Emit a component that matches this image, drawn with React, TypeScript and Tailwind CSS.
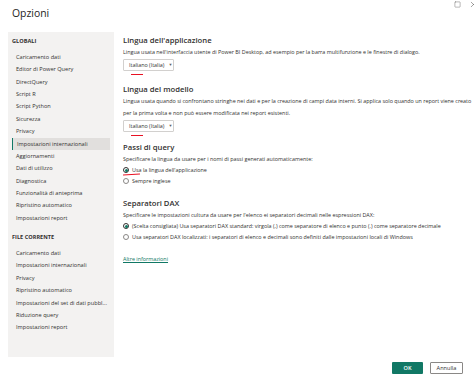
import { Square, X } from 'lucide-react';

const GLOBALI = [
  'Caricamento dati',
  'Editor di Power Query',
  'DirectQuery',
  'Script R',
  'Script Python',
  'Sicurezza',
  'Privacy',
  'Impostazioni internazionali',
  'Aggiornamenti',
  'Dati di utilizzo',
  'Diagnostica',
  'Funzionalità di anteprima',
  'Ripristino automatico',
  'Impostazioni report',
];

const FILE_CORRENTE = [
  'Caricamento dati',
  'Impostazioni internazionali',
  'Privacy',
  'Ripristino automatico',
  'Impostazioni del set di dati pubbl...',
  'Riduzione query',
  'Impostazioni report',
];

function NavItem({ label, active }: { label: string; active?: boolean }) {
  return (
    <div
      className={
        'h-[12.4px] mx-[4px] pl-[4px] flex items-center text-[5.6px] text-[#323130] whitespace-nowrap ' +
        (active ? 'bg-[#e1dfdd] border-l-[1.5px] border-[#117865] pl-[2.5px]' : '')
      }
    >
      {label}
    </div>
  );
}

function Dropdown() {
  return (
    <div className="w-[51px] h-[12px] border border-[#d2d0ce] rounded-[1px] flex items-center pl-[5px] gap-[4px] text-[5.4px] text-[#323130] bg-white">
      Italiano (Italia)
      <span className="text-[4px] text-[#605e5c]">▼</span>
    </div>
  );
}

function Radio({ checked, label }: { checked?: boolean; label: string }) {
  return (
    <div className="flex items-center gap-[3px] h-[10.5px] text-[5.4px] text-[#323130] whitespace-nowrap">
      <span
        className={
          'w-[6px] h-[6px] rounded-full border flex items-center justify-center shrink-0 ' +
          (checked ? 'border-[#323130]' : 'border-[#8a8886]')
        }
      >
        {checked && <span className="w-[3px] h-[3px] rounded-full bg-[#117865]" />}
      </span>
      {label}
    </div>
  );
}

function Heading({ children }: { children: string }) {
  return <h2 className="text-[7.7px] font-semibold text-[#323130] leading-[12px]">{children}</h2>;
}

function Desc({ children }: { children: string }) {
  return <p className="text-[5.4px] text-[#323130] leading-[12px]">{children}</p>;
}

export default function App() {
  return (
    <div
      className="w-[474px] h-[378px] bg-white relative overflow-hidden flex flex-col"
      style={{ fontFamily: '"Open Sans", "Noto Sans", sans-serif' }}
    >
      <div className="absolute right-[-4px] top-[0px] flex items-center gap-[8px] text-[#605e5c]">
        <Square className="w-[7px] h-[7px]" strokeWidth={1.5} />
        <X className="w-[9px] h-[9px]" strokeWidth={1.5} />
      </div>

      <div className="h-[32px] pl-[12px] pt-[6px] text-[10.4px] text-[#252423] leading-[14px]">Opzioni</div>

      <div className="flex h-[325px]">
        <nav className="ml-[8px] w-[106px] bg-[#f3f2f1] pt-[3px]">
          <div className="h-[12px] pl-[4px] flex items-center text-[5.6px] font-bold text-[#323130]">GLOBALI</div>
          <div className="mt-[3.8px]">
            {GLOBALI.map((l) => (
              <NavItem key={l} label={l} active={l === 'Impostazioni internazionali'} />
            ))}
          </div>
          <div className="mt-[7.3px] h-[12px] pl-[4px] flex items-center text-[5.6px] font-bold text-[#323130]">
            FILE CORRENTE
          </div>
          <div className="mt-[3.5px]">
            {FILE_CORRENTE.map((l) => (
              <NavItem key={'f' + l} label={l} />
            ))}
          </div>
        </nav>

        <main className="flex-1 pl-[9px] pt-[2px] relative">
          <section>
            <Heading>Lingua dell'applicazione</Heading>
            <Desc>
              Lingua usata nell'interfaccia utente di Power BI Desktop, ad esempio per la barra multifunzione e le finestre di dialogo.
            </Desc>
            <div className="mt-[1px] relative">
              <Dropdown />
              <div className="absolute left-[8px] top-[15px] w-[12px] h-[1px] bg-[#e81123]" />
            </div>
          </section>

          <section className="mt-[12px]">
            <Heading>Lingua del modello</Heading>
            <Desc>
              Lingua usata quando si confrontano stringhe nei dati e per la creazione di campi data interni. Si applica solo quando un report viene creato per la prima volta e non può essere modificata nei report esistenti.
            </Desc>
            <div className="mt-[1px] relative">
              <Dropdown />
              <div className="absolute left-[8px] top-[15px] w-[12px] h-[1px] bg-[#e81123]" />
            </div>
          </section>

          <section className="mt-[9px]">
            <Heading>Passi di query</Heading>
            <Desc>Specificare la lingua da usare per i nomi di passi generati automaticamente:</Desc>
            <div className="relative">
              <Radio checked label="Usa la lingua dell'applicazione" />
              <div className="absolute left-[0px] top-[9px] w-[17px] h-[1px] bg-[#e81123] rotate-[-3deg]" />
              <Radio label="Sempre inglese" />
            </div>
          </section>

          <section className="mt-[11px]">
            <Heading>Separatori DAX</Heading>
            <Desc>Specificare le impostazioni cultura da usare per l'elenco ei separatori decimali nelle espressioni DAX:</Desc>
            <Radio
              checked
              label="(Scelta consigliata) Usa separatori DAX standard: virgola (,) come separatore di elenco e punto (.) come separatore decimale"
            />
            <Radio label="Usa separatori DAX localizzati: i separatori di elenco e decimali sono definiti dalle impostazioni locali di Windows" />
          </section>

          <a className="block mt-[13px] text-[5.4px] text-[#117865] underline">Altre informazioni</a>
        </main>
      </div>

      <div className="flex justify-end gap-[7px] pr-[11px] pt-[5px]">
        <button className="w-[31px] h-[12px] bg-[#117865] text-white text-[5.6px] font-semibold rounded-[1px]">OK</button>
        <button className="w-[33px] h-[12px] bg-white border border-[#8a8886] text-[#323130] text-[5.6px] rounded-[1px]">
          Annulla
        </button>
      </div>
    </div>
  );
}
